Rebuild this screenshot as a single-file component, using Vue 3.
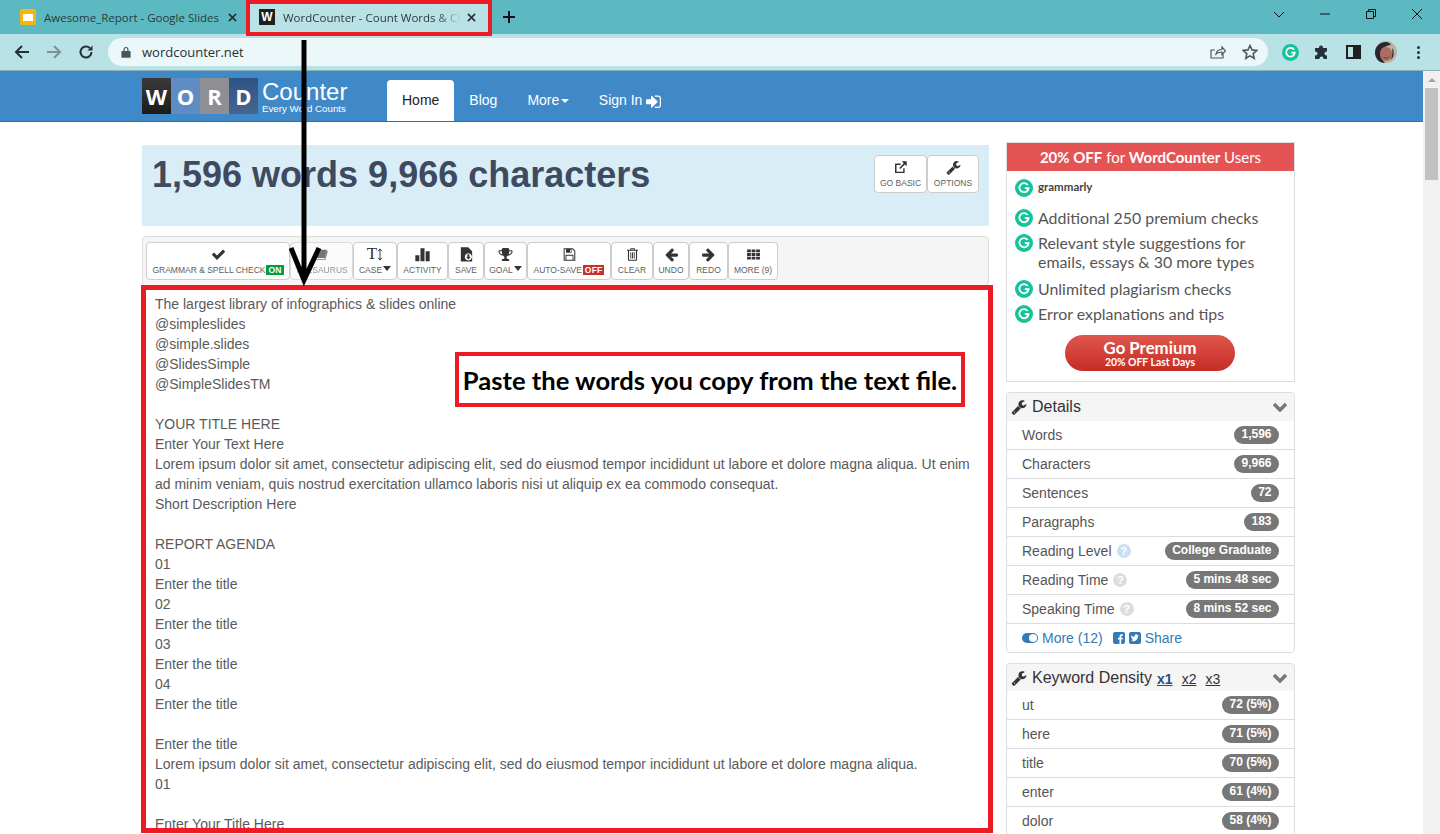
<template>
  <div class="screen">
    <div class="tabstrip">
      <div class="tab">
        <span class="slides-icon"><i></i></span>
        <span class="tab-title">Awesome_Report - Google Slides</span>
        <svg class="tab-x" viewBox="0 0 10 10"><path d="M1 1l8 8M9 1l-8 8" /></svg>
      </div>
      <div class="tab active">
        <span class="wc-icon">W</span>
        <span class="tab-title fade">WordCounter - Count Words &amp; Characters</span>
        <svg class="tab-x" viewBox="0 0 10 10"><path d="M1 1l8 8M9 1l-8 8" /></svg>
      </div>
      <svg class="new-tab" viewBox="0 0 12 12"><path d="M6 0v12M0 6h12" /></svg>
      <div class="window-btns">
        <svg viewBox="0 0 12 12"><path d="M1 4l5 5 5-5" /></svg>
        <svg viewBox="0 0 12 12"><path d="M1 6h10" /></svg>
        <svg viewBox="0 0 12 12"><path d="M1.5 3.5h7v7h-7zM3.5 3.5v-2h7v7h-2" /></svg>
        <svg viewBox="0 0 12 12"><path d="M1 1l10 10M11 1l-10 10" /></svg>
      </div>
    </div>

    <div class="browserbar">
      <svg class="nav-arrow" viewBox="0 0 16 16"><path d="M15 8H2M8 2L2 8l6 6" /></svg>
      <svg class="nav-arrow dim" viewBox="0 0 16 16"><path d="M1 8h13M8 2l6 6-6 6" /></svg>
      <svg class="nav-arrow" viewBox="0 0 16 16"><path d="M13.5 8a5.5 5.5 0 1 1-1.6-3.9" /><path class="solid" d="M14.5 1.5v5h-5z" /></svg>
      <div class="omnibox">
        <svg class="lock" viewBox="0 0 10 12"><path d="M1 5h8a.6.6 0 0 1 .6.6v5.5a.6.6 0 0 1-.6.6H1a.6.6 0 0 1-.6-.6V5.600A.6.6 0 0 1 1 5zM2.500 5V3.400a2.500 2.500 0 0 1 5 0V5H6.300V3.400a1.300 1.300 0 0 0-2.600 0V5z" /></svg>
        <span class="url">wordcounter.net</span>
        <svg class="omni-icon share" viewBox="0 0 16 16"><path d="M13 10v4H1V6h4M6 10c.5-3 3-4.500 6-4.500V3l3.500 3.800L12 10.500V8c-2.500 0-4.500.5-6 2z" /></svg>
        <svg class="omni-icon star" viewBox="0 0 16 16"><path d="M8 1.500l2 4.400 4.800.5-3.600 3.200 1 4.700L8 11.900l-4.200 2.400 1-4.700L1.200 6.400 6 5.900z" /></svg>
      </div>
      <div class="ext-icons">
        <svg class="grammarly" viewBox="0 0 18 18"><circle cx="9" cy="9" r="9" /><path d="M12.800 6a4.600 4.600 0 1 0 .8 3.200H9.800" /></svg>
        <svg class="puzzle" viewBox="0 0 16 16"><path d="M5 3.500a2 2 0 0 1 4 0V4h4v3.500h-.5a2 2 0 0 0 0 4h.5V15H9.500v-.5a2 2 0 0 0-4 0v.5H1v-3.500h.5a2 2 0 0 0 0-4H1V4h4z" /></svg>
        <span class="side-panel"><i></i></span>
        <svg class="avatar" viewBox="0 0 22 22">
          <circle cx="11" cy="11" r="11" fill="#b9b3a0" />
          <path d="M0 12C0 5 5 1 11 1c2 0 4 1 5 3-3 0-5 1-6 2-3 1-5 4-4 8 0 3 2 6 4 8-6 0-10-5-10-10z" fill="#2a2530" />
          <path d="M5 13c0-4 2-7 6-7s6 3 6 7-2 7-6 7-6-3-6-7z" fill="#a86f62" />
          <path d="M17 7c2 2 2 6 1 9l-2 3c1-4 2-8 1-12z" fill="#2a2530" />
          <path d="M8 16c2 1 4 1 6 0-1 2-5 2-6 0z" fill="#6f2a2a" />
        </svg>
        <span class="dots"><i></i><i></i><i></i></span>
      </div>
    </div>

    <div class="page">
      <div class="site">
        <nav class="site-nav">
          <div class="logo">
            <span class="tile t-w">W</span>
            <span class="tile t-o">O</span>
            <span class="tile t-r">R</span>
            <span class="tile t-d">D</span>
            <div class="logo-text">
              <span class="logo-main">Counter</span>
              <span class="logo-sub">Every Word Counts</span>
            </div>
          </div>
          <a class="nav-item home">Home</a>
          <a class="nav-item">Blog</a>
          <a class="nav-item">More<span class="caret"></span></a>
          <a class="nav-item sign">Sign In
            <svg class="signin" viewBox="0 0 1536 1536"><path :d="icons.signin" /></svg>
          </a>
        </nav>

        <div class="columns">
          <main class="main-col">
            <div class="jumbo">
              <h1>1,596 words 9,966 characters</h1>
              <div class="btn-group">
                <div v-for="b in topButtons" :key="b.label" class="tool" :style="{ width: b.width + 'px' }">
                  <svg class="fa" viewBox="0 0 1792 1792"><path :d="icons[b.icon]" /></svg>
                  <span class="tool-label">{{ b.label }}</span>
                </div>
              </div>
            </div>

            <div class="toolbar">
              <div
                v-for="b in tools"
                :key="b.label"
                class="tool"
                :class="{ disabled: b.disabled }"
                :style="{ width: b.width + 'px' }"
              >
                <span v-if="b.icon === 'case'" class="case-icon">T<svg viewBox="0 0 6 14"><path d="M3 1v12M1 3.500L3 1l2 2.500M1 10.500L3 13l2-2.500" /></svg></span>
                <svg v-else class="fa" viewBox="0 0 1792 1792"><path :d="icons[b.icon]" /></svg>
                <span class="tool-label">
                  {{ b.label }}<span v-if="b.caret" class="caret dark"></span>
                  <span v-if="b.flag" class="flag" :class="b.flag.toLowerCase()">{{ b.flag }}</span>
                </span>
              </div>
            </div>

            <div class="editor">{{ editorText }}</div>
          </main>

          <aside class="side-col">
            <div class="ad">
              <div class="ad-head"><b>20% OFF</b> for <b>WordCounter</b> Users</div>
              <div class="ad-logo">
                <svg class="g-mark" viewBox="0 0 18 18"><circle cx="9" cy="9" r="9" /><path d="M12.800 6a4.600 4.600 0 1 0 .8 3.200H9.800" /></svg>
                <span>grammarly</span>
              </div>
              <ul class="ad-list">
                <li v-for="item in adItems" :key="item">
                  <svg class="g-mark" viewBox="0 0 18 18"><circle cx="9" cy="9" r="9" /><path d="M12.800 6a4.600 4.600 0 1 0 .8 3.200H9.800" /></svg>
                  <span>{{ item }}</span>
                </li>
              </ul>
              <div class="premium">
                <strong>Go Premium</strong>
                <small>20% OFF Last Days</small>
              </div>
            </div>

            <section class="panel">
              <header class="panel-head">
                <svg class="fa" viewBox="0 0 1792 1792"><path :d="icons.wrench" /></svg>
                <span>Details</span>
                <svg class="chev" viewBox="0 0 16 10"><path d="M2 2l6 6 6-6" /></svg>
              </header>
              <div v-for="row in details" :key="row.name" class="row">
                <span>{{ row.name }}<i v-if="row.help" class="help" :class="{ blue: row.blue }">?</i></span>
                <span class="badge">{{ row.value }}</span>
              </div>
              <div class="row foot">
                <span class="toggle"></span>
                <a>More (12)</a>
                <svg class="social fb" viewBox="0 0 12 12"><rect width="12" height="12" rx="2" /><path d="M8.200 12V7.500h1.400l.2-1.700H8.200v-1c0-.5.200-.8.800-.8h.9V2.400C9.700 2.300 9.200 2.300 8.700 2.300c-1.300 0-2.200.8-2.200 2.200v1.300H5v1.700h1.500V12z" /></svg>
                <svg class="social tw" viewBox="0 0 12 12"><rect width="12" height="12" rx="2" /><path d="M10 3.500c-.3.200-.7.300-1 .3.400-.2.600-.5.800-.9-.3.200-.7.300-1.100.4a1.700 1.700 0 0 0-3 1.600C4.200 4.800 3.100 4.200 2.400 3.200c-.4.700-.2 1.600.5 2.100-.3 0-.5-.1-.7-.2 0 .8.500 1.500 1.300 1.700-.2.100-.5.100-.7 0 .2.700.8 1.100 1.600 1.200-.7.500-1.500.8-2.400.7 2.700 1.500 6.800.2 6.900-4.400.3-.2.500-.5.800-.8z" /></svg>
                <a>Share</a>
              </div>
            </section>

            <section class="panel keywords">
              <header class="panel-head">
                <svg class="fa" viewBox="0 0 1792 1792"><path :d="icons.wrench" /></svg>
                <span>Keyword Density</span>
                <a class="kw on">x1</a>
                <a class="kw">x2</a>
                <a class="kw">x3</a>
                <svg class="chev" viewBox="0 0 16 10"><path d="M2 2l6 6 6-6" /></svg>
              </header>
              <div v-for="row in keywords" :key="row.name" class="row">
                <span>{{ row.name }}</span>
                <span class="badge">{{ row.value }}</span>
              </div>
            </section>
          </aside>
        </div>
      </div>

      <div class="scrollbar">
        <span class="scroll-up"></span>
        <span class="scroll-thumb"></span>
      </div>
    </div>

    <!-- annotations drawn on top of the screenshot -->
    <div class="mark mark-tab"></div>
    <div class="mark mark-editor"></div>
    <div class="callout">Paste the words you copy from the text file.</div>
    <svg class="down-arrow" viewBox="0 0 40 250" width="40" height="250">
      <path d="M15 0V238M2 208L15 240 30 208" />
    </svg>
  </div>
</template>

<script setup>
const icons = {
  check:
    'M1671 566q0 40-28 68l-724 724-136 136q-28 28-68 28t-68-28l-136-136-362-362q-28-28-28-68t28-68l136-136q28-28 68-28t68 28l294 295 656-657q28-28 68-28t68 28l136 136q28 28 28 68z',
  wrench:
    'M448 1472q0-26-19-45t-45-19-45 19-19 45 19 45 45 19 45-19 19-45zm644-420l-682 682q-37 37-90 37-52 0-91-37l-106-108q-38-36-38-90 0-53 38-91l681-681q39 98 114.5 173.5t173.5 114.5zm634-435q0 39-23 106-47 134-164.5 217.5t-258.5 83.5q-185 0-316.5-131.5t-131.5-316.5 131.5-316.5 316.5-131.5q58 0 121.5 16.5t107.5 46.5q16 11 16 28t-16 28l-293 169v224l193 107q5-3 79-48.5t135.5-81 70.5-35.5q15 0 23.5 10t8.5 25z',
  left: 'M1664 896v128q0 53-32.5 90.5t-84.5 37.5h-704l293 294q38 36 38 90t-38 90l-75 76q-37 37-90 37-52 0-91-37l-651-652q-37-37-37-90 0-52 37-91l651-650q38-38 91-38 52 0 90 38l75 74q38 38 38 91t-38 91l-293 293h704q52 0 84.5 37.5t32.5 90.5z',
  right:
    'M1600 960q0 54-37 91l-651 651q-39 37-91 37-51 0-90-37l-75-75q-38-38-38-91t38-91l293-293h-704q-52 0-84.5-37.5t-32.5-90.5v-128q0-53 32.5-90.5t84.5-37.5h704l-293-294q-38-36-38-90t38-90l75-75q38-38 90-38 53 0 91 38l651 651q37 35 37 90z',
  grid: 'M128 288h448v352H128zM672 288h448v352H672zM1216 288h448v352h-448zM128 720h448v352H128zM672 720h448v352H672zM1216 720h448v352h-448zM128 1152h448v352H128zM672 1152h448v352H672zM1216 1152h448v352h-448z',
  bars: 'M40 1000h480v700H40zM656 150h480v1550H656zM1272 500h480v1200h-480z',
  book: 'M420 320h1120l-260 1000H260zM240 1420h1040l260-1000 110 60-280 1040H240q-120 0-120-100z',
  save: 'M220 40h880l470 470v1230H220zM1120 760a420 420 0 1 0 .1 0zM1000 880h240v320h150l-270 280-270-280h150z',
  trophy:
    'M522 883q-74-162-74-371h-256v96q0 78 94.500 162t235.500 113zm1078-275v-96h-256q0 209-74 371 141-29 235.500-113t94.500-162zm128-128v128q0 71-41.500 143t-112 130-173 97.500-215.500 44.500q-42 54-95 95-38 34-52.500 72.500t-14.500 89.500q0 54 30.500 91t97.500 37q75 0 133.500 45.500t58.500 114.500v64q0 14-9 23t-23 9h-832q-14 0-23-9t-9-23v-64q0-69 58.500-114.500t133.500-45.500q67 0 97.500-37t30.500-91q0-51-14.500-89.500t-52.500-72.500q-53-41-95-95-113-5-215.500-44.500t-173-97.500-112-130-41.500-143v-128q0-40 28-68t68-28h288v-96q0-66 47-113t113-47h576q66 0 113 47t47 113v96h288q40 0 68 28t28 68z',
  floppy:
    'M200 160H1300L1592 452V1632H200zM320 280v1232h1152V500L1250 280zM480 280h680v400H480zM980 340h120v280H980zM420 940h952v572h-110V1060H530v452H420z',
  trash:
    'M660 150h472l80 180h340v130h-110v1060q0 120-120 120H470q-120 0-120-120V460H240V330h340zM720 270l-30 60h412l-30-60zM480 460v1060q0 10 10 10h812q10 0 10-10V460zM640 620h110v760H640zM841 620h110v760H841zM1042 620h110v760h-110z',
  link: 'M1040 160h592v592l-220-220-540 540-130-130 540-540zM300 420h620v170H420v800h800V980h170v520q0 60-60 60H300q-60 0-60-60V480q0-60 60-60z',
  signin:
    'M1184 896q0 26-19 45l-544 544q-19 19-45 19t-45-19-19-45v-288h-448q-26 0-45-19t-19-45v-384q0-26 19-45t45-19h448v-288q0-26 19-45t45-19 45 19l544 544q19 19 19 45zm352-352v704q0 119-84.500 203.500t-203.500 84.500h-320q-13 0-22.500-9.500t-9.500-22.500q0-4-1-20t-.5-26.500 3-23.500 10-19.5 20.500-6.500h320q66 0 113-47t47-113v-704q0-66-47-113t-113-47h-312l-11.500-1-11.500-3-8-5.500-7-9-2-13.500q0-4-1-20t-.5-26.500 3-23.500 10-19.500 20.500-6.500h320q119 0 203.500 84.500t84.500 203.500z',
}

const topButtons = [
  { label: 'GO BASIC', icon: 'link', width: 53 },
  { label: 'OPTIONS', icon: 'wrench', width: 52 },
]

const tools = [
  { label: 'GRAMMAR & SPELL CHECK', icon: 'check', width: 144, flag: 'ON' },
  { label: 'THESAURUS', icon: 'book', width: 63, disabled: true },
  { label: 'CASE', icon: 'case', width: 44, caret: true },
  { label: 'ACTIVITY', icon: 'bars', width: 51 },
  { label: 'SAVE', icon: 'save', width: 36 },
  { label: 'GOAL', icon: 'trophy', width: 43, caret: true },
  { label: 'AUTO-SAVE', icon: 'floppy', width: 84, flag: 'OFF' },
  { label: 'CLEAR', icon: 'trash', width: 42 },
  { label: 'UNDO', icon: 'left', width: 36 },
  { label: 'REDO', icon: 'right', width: 39 },
  { label: 'MORE (9)', icon: 'grid', width: 50 },
]

const adItems = [
  'Additional 250 premium checks',
  'Relevant style suggestions for emails, essays & 30 more types',
  'Unlimited plagiarism checks',
  'Error explanations and tips',
]

const details = [
  { name: 'Words', value: '1,596' },
  { name: 'Characters', value: '9,966' },
  { name: 'Sentences', value: '72' },
  { name: 'Paragraphs', value: '183' },
  { name: 'Reading Level', value: 'College Graduate', help: true, blue: true },
  { name: 'Reading Time', value: '5 mins 48 sec', help: true },
  { name: 'Speaking Time', value: '8 mins 52 sec', help: true },
]

const keywords = [
  { name: 'ut', value: '72 (5%)' },
  { name: 'here', value: '71 (5%)' },
  { name: 'title', value: '70 (5%)' },
  { name: 'enter', value: '61 (4%)' },
  { name: 'dolor', value: '58 (4%)' },
]

const editorText = `The largest library of infographics & slides online
@simpleslides
@simple.slides
@SlidesSimple
@SimpleSlidesTM

YOUR TITLE HERE
Enter Your Text Here
Lorem ipsum dolor sit amet, consectetur adipiscing elit, sed do eiusmod tempor incididunt ut labore et dolore magna aliqua. Ut enim ad minim veniam, quis nostrud exercitation ullamco laboris nisi ut aliquip ex ea commodo consequat.
Short Description Here

REPORT AGENDA
01
Enter the title
02
Enter the title
03
Enter the title
04
Enter the title

Enter the title
Lorem ipsum dolor sit amet, consectetur adipiscing elit, sed do eiusmod tempor incididunt ut labore et dolore magna aliqua.
01

Enter Your Title Here`
</script>

<style>
html,
body {
  margin: 0;
  overflow: hidden;
}
</style>

<style scoped>
.screen {
  position: relative;
  width: 1440px;
  height: 834px;
  overflow: hidden;
  background: #fff;
  font-family: 'Liberation Sans', Arial, sans-serif;
  color: #555;
  display: flex;
  flex-direction: column;
}

/* browser chrome */
.tabstrip {
  height: 34px;
  flex: none;
  display: flex;
  align-items: flex-start;
  padding-left: 8px;
  background: #5cb9c1;
  font-family: 'Open Sans', sans-serif;
  font-size: 11.5px;
  color: #2b3a3d;
}
.tab {
  width: 239px;
  height: 34px;
  box-sizing: border-box;
  display: flex;
  align-items: center;
  padding: 0 10px 0 12px;
}
.tab.active {
  background: #b8e2e6;
  border-radius: 8px 8px 0 0;
  width: 243px;
  padding: 0 14px 0 12px;
}
.tab-title {
  flex: 1;
  min-width: 0;
  white-space: nowrap;
  overflow: hidden;
  margin-left: 8px;
}
.tab-title.fade {
  -webkit-mask-image: linear-gradient(90deg, #000 86%, transparent 100%);
  mask-image: linear-gradient(90deg, #000 86%, transparent 100%);
}
.tab-x {
  width: 9px;
  height: 9px;
  flex: none;
  fill: none;
  stroke: #263238;
  stroke-width: 1.8;
  margin-left: 6px;
}
.slides-icon {
  width: 16px;
  height: 16px;
  border-radius: 2px;
  background: #f6b60d;
  display: flex;
  align-items: center;
  justify-content: center;
}
.slides-icon i {
  width: 10px;
  height: 7px;
  background: #fff;
}
.wc-icon {
  width: 16px;
  height: 16px;
  background: #1f1f1f;
  color: #fff;
  font: bold 12px/16px 'Liberation Sans', sans-serif;
  text-align: center;
}
.new-tab {
  width: 12px;
  height: 12px;
  margin: 11px 0 0 13px;
  fill: none;
  stroke: #111;
  stroke-width: 2;
}
.window-btns {
  margin-left: auto;
  display: flex;
  gap: 34px;
  padding: 8px 17px 0 0;
}
.window-btns svg {
  width: 12px;
  height: 12px;
  fill: none;
  stroke: #111;
  stroke-width: 1;
}

.browserbar {
  height: 36px;
  flex: none;
  display: flex;
  align-items: center;
  padding-left: 14px;
  background: #b8e2e6;
  border-bottom: 1px solid #8fb0b5;
}
.nav-arrow {
  width: 16px;
  height: 16px;
  margin-right: 16px;
  fill: none;
  stroke: #263238;
  stroke-width: 2;
}
.nav-arrow.dim {
  stroke: #7c9295;
}
.nav-arrow .solid {
  fill: #263238;
  stroke: none;
}
.omnibox {
  width: 1160px;
  height: 28px;
  margin-left: -2px;
  box-sizing: border-box;
  border-radius: 14px;
  background: #ebf7f8;
  display: flex;
  align-items: center;
  padding: 0 10px 0 13px;
}
.lock {
  width: 10px;
  height: 12px;
  fill: #4a5558;
}
.url {
  margin-left: 11px;
  font-family: 'Open Sans', sans-serif;
  font-size: 13px;
  color: #263238;
}
.omni-icon {
  width: 16px;
  height: 16px;
  fill: none;
  stroke: #4d5a5e;
  stroke-width: 1.2;
}
.omni-icon.share {
  margin-left: auto;
}
.omni-icon.star {
  margin-left: 16px;
  stroke-width: 1.6;
}
.ext-icons {
  display: flex;
  align-items: center;
  margin-left: 14px;
}
.grammarly {
  width: 17px;
  height: 17px;
}
.grammarly circle,
.g-mark circle {
  fill: #15c39a;
}
.grammarly path,
.g-mark path {
  fill: none;
  stroke: #fff;
  stroke-width: 1.8;
}
.puzzle {
  width: 16px;
  height: 16px;
  margin-left: 15px;
  fill: #263238;
}
.side-panel {
  width: 15px;
  height: 14px;
  margin-left: 16px;
  box-sizing: border-box;
  border: 2px solid #1f1f1f;
  display: flex;
  justify-content: flex-end;
}
.side-panel i {
  width: 6px;
  background: #1f1f1f;
}
.avatar {
  width: 22px;
  height: 22px;
  margin-left: 14px;
}
.dots {
  display: flex;
  flex-direction: column;
  gap: 2px;
  margin-left: 20px;
}
.dots i {
  width: 3px;
  height: 3px;
  border-radius: 50%;
  background: #263238;
}

/* page */
.page {
  flex: 1;
  min-height: 0;
  display: flex;
}
.site {
  width: 1423px;
  flex: none;
}
.scrollbar {
  width: 17px;
  background: #f1f1f1;
  display: flex;
  flex-direction: column;
  align-items: center;
}
.scroll-up {
  width: 0;
  height: 0;
  margin-top: 7px;
  border: 4px solid transparent;
  border-top: 0;
  border-bottom: 4px solid #a3a3a3;
}
.scroll-thumb {
  width: 13px;
  height: 92px;
  margin-top: 6px;
  background: #c1c1c1;
}

.site-nav {
  height: 51px;
  box-sizing: border-box;
  padding: 9px 0 0 142px;
  display: flex;
  align-items: stretch;
  background: #4089c9;
  border-bottom: 1px solid #2f6ea6;
}
.logo {
  display: flex;
  align-items: flex-start;
  width: 245px;
  margin-top: -2px;
}
.tile {
  width: 29px;
  height: 36px;
  color: #fff;
  font: bold 22px/37px 'Open Sans', sans-serif;
  text-align: center;
}
.t-w {
  background: linear-gradient(#3a3a3a, #1c1c1c);
}
.t-o {
  background: #5f8dc3;
}
.t-r {
  background: #8d8f93;
}
.t-d {
  background: linear-gradient(#2f5484, #46658f);
}
.logo-text {
  margin-left: 4px;
  display: flex;
  flex-direction: column;
  color: #fff;
}
.logo-main {
  font-size: 24px;
  line-height: 24px;
  margin-top: 2px;
}
.logo-sub {
  font-size: 9.7px;
  line-height: 10px;
}
.nav-item {
  padding: 0 15px;
  color: #fff;
  font-size: 14px;
  line-height: 41px;
  white-space: nowrap;
}
.nav-item.sign {
  margin-left: -0.5px;
}
.nav-item.home {
  background: #fff;
  color: #222;
  border-radius: 4px 4px 0 0;
}
.caret {
  display: inline-block;
  margin-left: 2px;
  vertical-align: middle;
  border: 4px solid transparent;
  border-bottom: 0;
  border-top: 4px solid #fff;
}
.caret.dark {
  border-width: 5px 4.5px 0;
  border-top-color: #333;
  margin-left: 1px;
  vertical-align: 2px;
}
.signin {
  width: 15px;
  height: 15px;
  fill: #fff;
  vertical-align: -3px;
}

.columns {
  display: flex;
  align-items: flex-start;
  gap: 17px;
  padding: 20px 0 0 142px;
}
.main-col {
  width: 847px;
  flex: none;
  padding-top: 3px;
}
.jumbo {
  height: 81px;
  box-sizing: border-box;
  padding: 10px;
  background: #d9edf7;
  display: flex;
  justify-content: space-between;
  align-items: flex-start;
}
.jumbo h1 {
  margin: 0;
  font-size: 36px;
  line-height: 40px;
  font-weight: bold;
  color: #3e4a5f;
}
.btn-group {
  display: flex;
}
.toolbar {
  margin-top: 10px;
  height: 50px;
  box-sizing: border-box;
  padding: 5px 3px;
  display: flex;
  background: #f5f5f5;
  border: 1px solid #ddd;
  border-radius: 4px;
}
.tool {
  height: 38px;
  box-sizing: border-box;
  flex: none;
  background: #fff;
  border: 1px solid #ccc;
  border-radius: 4px;
  display: flex;
  flex-direction: column;
  align-items: center;
  white-space: nowrap;
}
.tool.disabled {
  opacity: 0.65;
}
.tool .fa {
  width: 15px;
  height: 15px;
  margin-top: 4px;
  fill: #333;
  fill-rule: evenodd;
}
.tool-label {
  margin-top: 3px;
  font-size: 8.5px;
  line-height: 11px;
  color: #606060;
}
.case-icon {
  display: flex;
  height: 20px;
  margin-top: 2px;
  color: #333;
  font: 17px/18px 'Liberation Serif', serif;
}
.case-icon svg {
  width: 6px;
  height: 13px;
  margin-top: 3px;
  fill: none;
  stroke: #333;
}
.case-icon + .tool-label {
  margin-top: 0;
}
.flag {
  color: #fff;
  font-weight: bold;
  padding: 0 2px;
  margin-left: 1px;
  letter-spacing: 0.2px;
}
.flag.on {
  background: #009e3d;
}
.flag.off {
  background: #c9302c;
}
.editor {
  height: 560px;
  box-sizing: border-box;
  padding: 7px 12px;
  border: 1px solid #ddd;
  font-size: 14px;
  line-height: 20px;
  color: #5a5a5a;
  white-space: pre-wrap;
}

/* sidebar */
.side-col {
  width: 289px;
  flex: none;
}
.ad {
  height: 240px;
  box-sizing: border-box;
  border: 1px solid #ddd;
  font-family: Lato, sans-serif;
}
.ad-head {
  height: 28px;
  background: #e55454;
  color: #fff;
  font-size: 15px;
  line-height: 28px;
  text-align: center;
}
.ad-logo {
  display: flex;
  align-items: center;
  gap: 5px;
  margin: 8px 0 0 8px;
  font-size: 11.5px;
  line-height: 14px;
  font-weight: bold;
  color: #444;
}
.ad-logo span {
  padding-bottom: 2px;
}
.g-mark {
  width: 18px;
  height: 18px;
  flex: none;
}
.ad-list {
  list-style: none;
  margin: 12px 0 0;
  padding: 0 8px;
  display: flex;
  flex-direction: column;
  gap: 6px;
  font-size: 15.9px;
  line-height: 19px;
  color: #555;
}
.ad-list li {
  display: flex;
  gap: 5px;
  min-height: 19px;
}
.ad-list li span {
  margin-top: -1px;
}
.ad-list li:nth-child(2) {
  margin-bottom: 3px;
}
.premium {
  width: 170px;
  height: 36px;
  margin: 11px 0 0 58px;
  border-radius: 18px;
  background: linear-gradient(#e0574d, #c52c25);
  color: #fff;
  display: flex;
  flex-direction: column;
  align-items: center;
  padding-top: 4px;
  box-sizing: border-box;
}
.premium strong {
  font-size: 16.8px;
  line-height: 18px;
  font-weight: 700;
}
.premium small {
  font-size: 10.4px;
  line-height: 11px;
  font-weight: bold;
}
.panel {
  margin-top: 10px;
  border: 1px solid #ddd;
  border-radius: 4px;
  font-size: 14px;
}
.panel-head {
  height: 28px;
  box-sizing: border-box;
  display: flex;
  align-items: center;
  padding: 0 6px 0 4px;
  background: #f5f5f5;
  font-size: 16px;
  color: #333;
  border-radius: 4px 4px 0 0;
}
.keywords .panel-head {
  height: 27px;
}
.panel-head .fa {
  width: 16px;
  height: 16px;
  fill: #333;
  margin-right: 5px;
}
.chev {
  width: 16px;
  height: 10px;
  margin-left: auto;
  fill: none;
  stroke: #777;
  stroke-width: 3.5;
}
.kw {
  font-size: 14px;
  text-decoration: underline;
  color: #333;
  margin-left: 9px;
  padding-top: 2px;
}
.kw.on {
  margin-left: 5px;
  color: #23527c;
  font-weight: bold;
}
.row {
  height: 29px;
  box-sizing: border-box;
  display: flex;
  align-items: center;
  justify-content: space-between;
  padding: 0 15px;
  border-bottom: 1px solid #ddd;
  color: #555;
}
.help {
  display: inline-block;
  width: 14px;
  height: 14px;
  margin-left: 5px;
  border-radius: 50%;
  background: #ddd;
  color: #fff;
  font: bold 11px/14px 'Liberation Sans', sans-serif;
  text-align: center;
  vertical-align: 1px;
}
.help.blue {
  background: #c9dff2;
}
.badge {
  height: 18px;
  box-sizing: border-box;
  padding: 0 7.5px;
  border-radius: 10px;
  background: #777;
  color: #fff;
  font-size: 12px;
  font-weight: bold;
  line-height: 16px;
}
.foot {
  height: 28px;
  border-bottom: 0;
  justify-content: flex-start;
}
.foot a {
  color: #337ab7;
}
.toggle {
  position: relative;
  width: 16px;
  height: 10px;
  border-radius: 5px;
  background: #337ab7;
  margin-right: 4px;
}
.toggle::after {
  content: '';
  position: absolute;
  right: 1px;
  top: 1px;
  width: 8px;
  height: 8px;
  border-radius: 50%;
  background: #fff;
}
.social {
  width: 12px;
  height: 12px;
  margin-left: 4px;
}
.social.fb {
  margin-left: 10px;
}
.social rect {
  fill: #337ab7;
}
.social path {
  fill: #fff;
}
.foot .social + a {
  margin-left: 4px;
}

/* annotations */
.mark {
  position: absolute;
  box-sizing: border-box;
  border: 4px solid #ed1c24;
}
.mark-tab {
  left: 246px;
  top: 0;
  width: 246px;
  height: 36px;
}
.mark-editor {
  left: 141px;
  top: 285px;
  width: 852px;
  height: 548px;
  border-width: 5px;
}
.callout {
  position: absolute;
  left: 455px;
  top: 352px;
  width: 510px;
  height: 55px;
  box-sizing: border-box;
  border: 4px solid #ed1c24;
  background: #fff;
  color: #000;
  font-family: Lato, sans-serif;
  font-size: 25.6px;
  font-weight: bold;
  line-height: 48px;
  text-align: center;
  white-space: nowrap;
}
.down-arrow {
  position: absolute;
  left: 289px;
  top: 40px;
  fill: none;
  stroke: #000;
  stroke-width: 5;
}
</style>
